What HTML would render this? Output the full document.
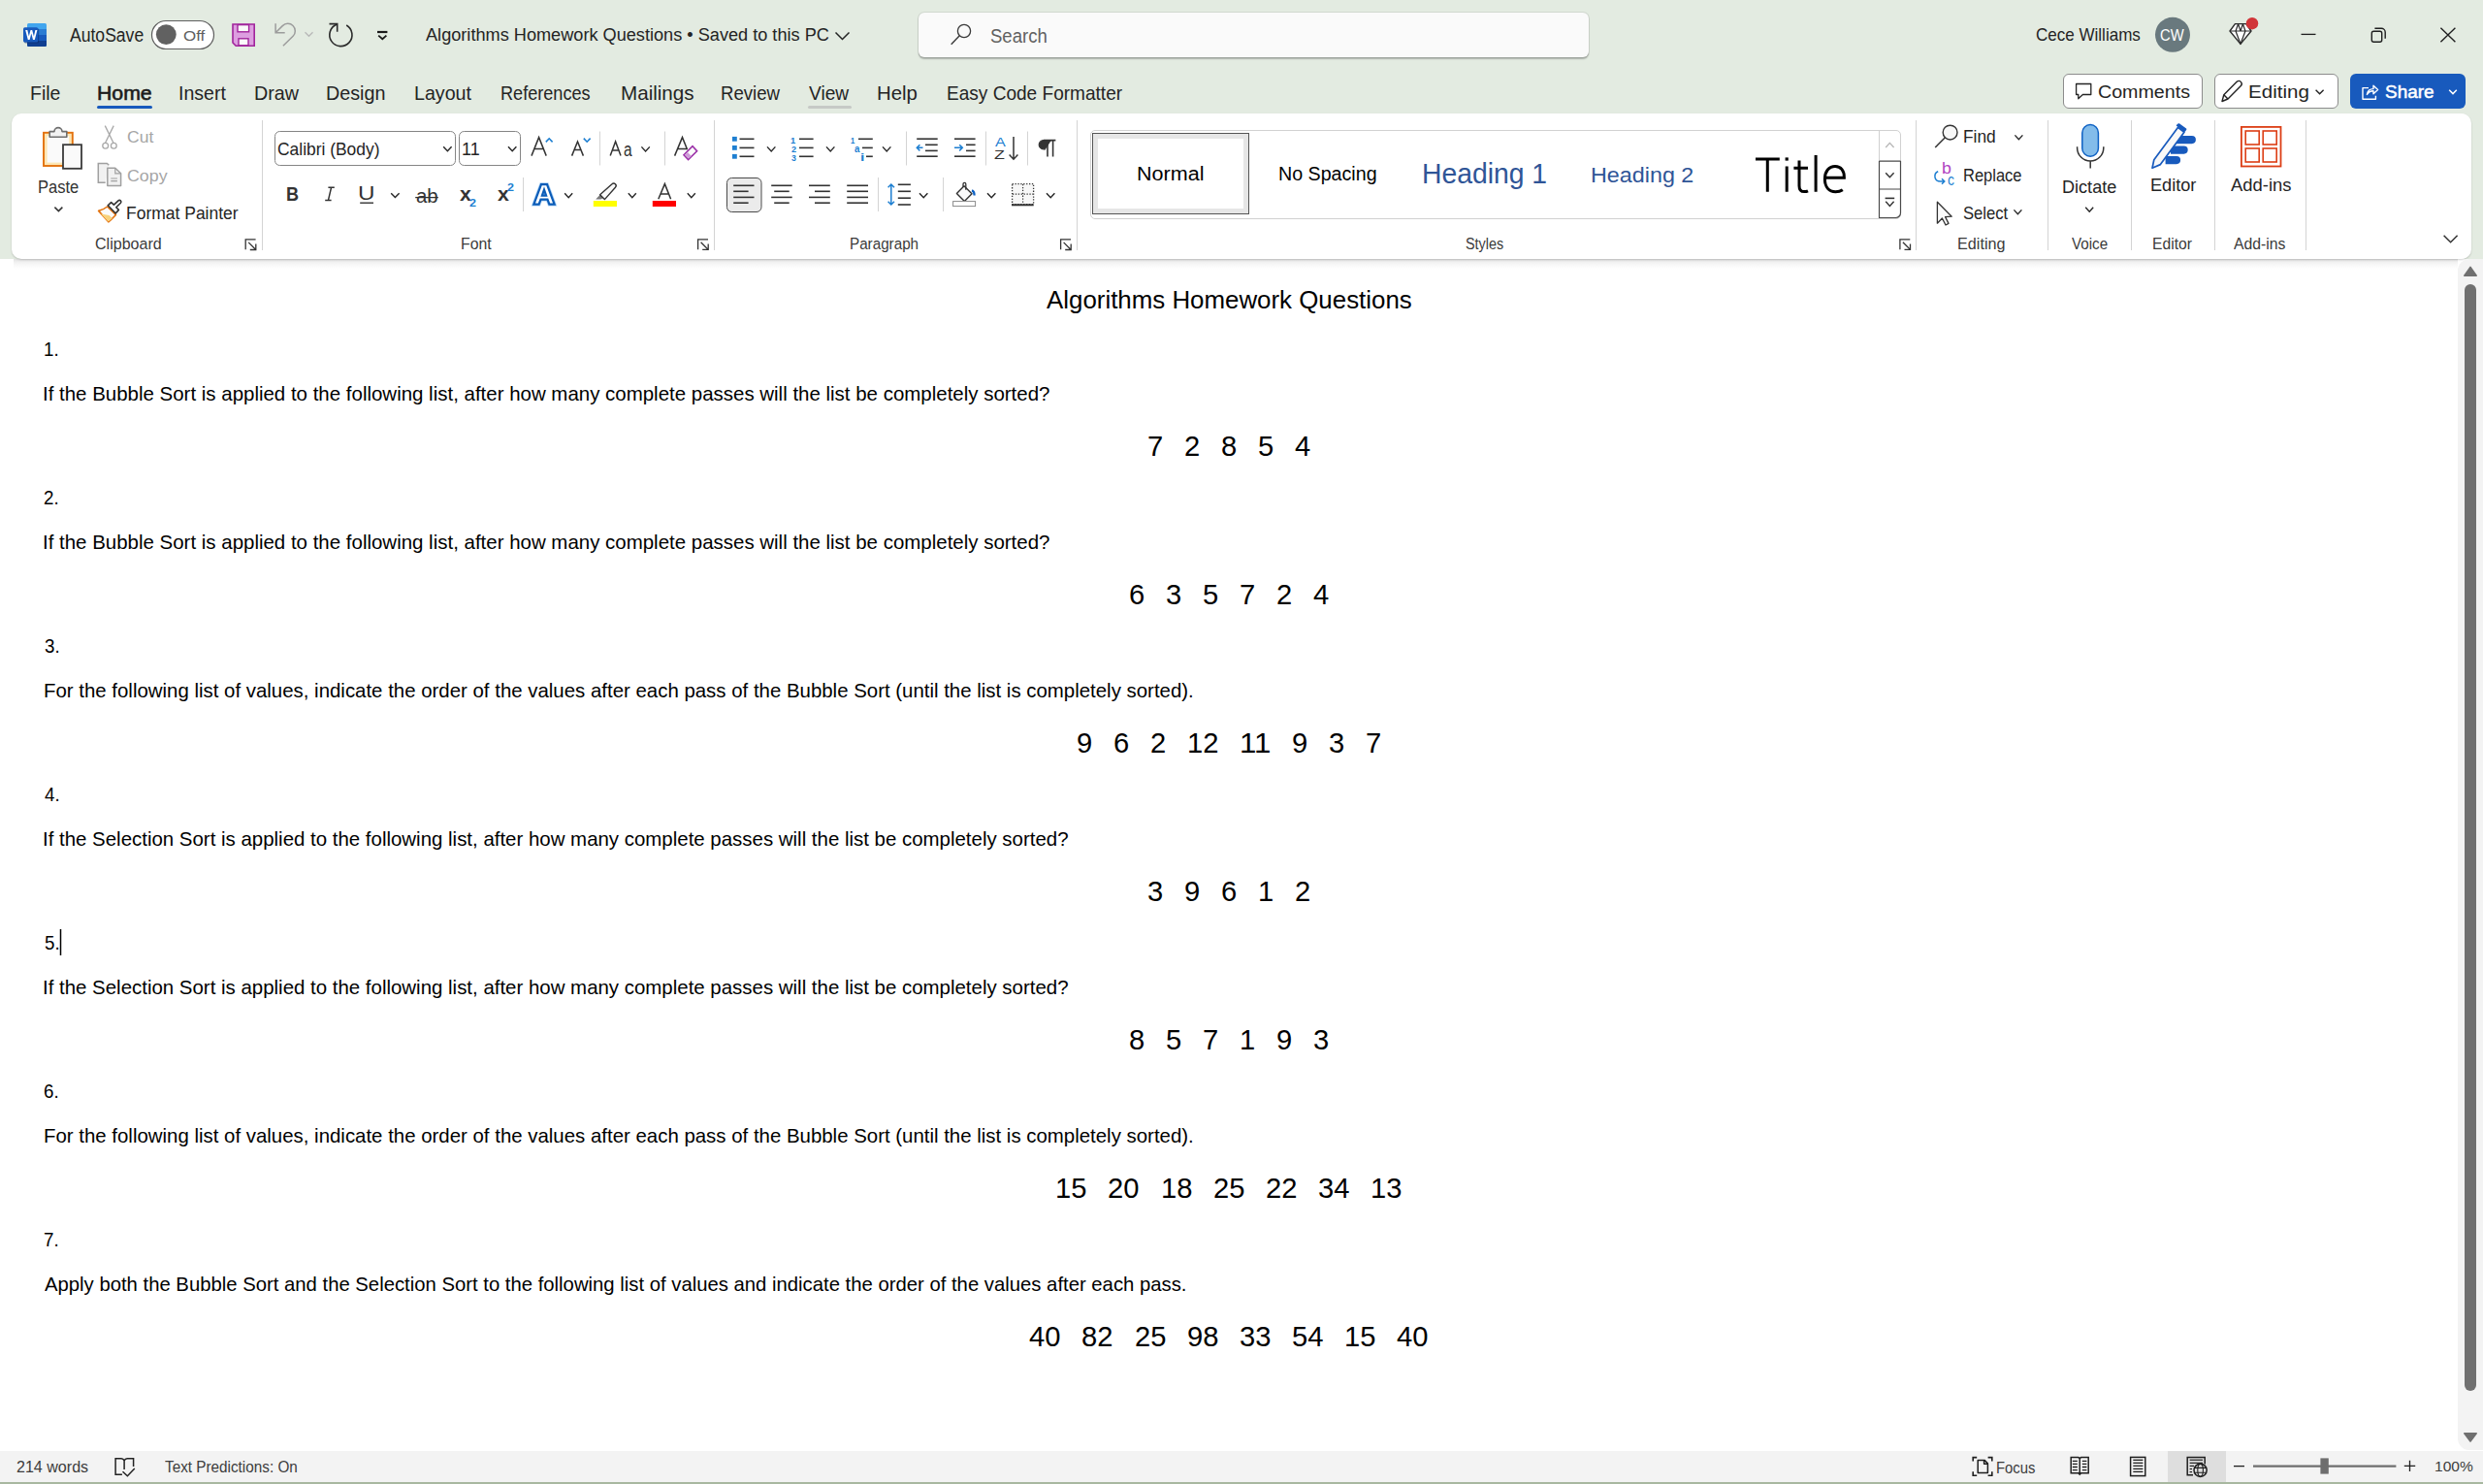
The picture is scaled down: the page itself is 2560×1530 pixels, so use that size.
<!DOCTYPE html>
<html><head><meta charset="utf-8"><title>Algorithms Homework Questions - Word</title>
<style>
html,body{margin:0;padding:0;width:2560px;height:1530px;overflow:hidden;background:#fff}
body{position:relative;font-family:"Liberation Sans",sans-serif}
.t{position:absolute;white-space:nowrap;line-height:0;transform-origin:0 0;font-family:"Liberation Sans",sans-serif}
svg{overflow:visible}
</style></head><body>
<div style="position:absolute;left:0px;top:0px;width:2560px;height:267px;background:#e3ebe1;"></div>
<div style="position:absolute;left:0px;top:267px;width:2560px;height:1229px;background:#ffffff;"></div>
<div style="position:absolute;left:14px;top:267px;width:2520px;height:11px;background:linear-gradient(#e2e2e2,#f3f3f3 35%,#fcfcfc 75%,#fff)"></div>
<div style="position:absolute;left:12px;top:117px;width:2536px;height:150px;background:#fff;border-radius:10px;box-shadow:0 1px 2px rgba(0,0,0,0.18)"></div>
<div style="position:absolute;left:0px;top:1496px;width:2560px;height:32px;background:#f3f3f3;"></div>
<div style="position:absolute;left:0px;top:1528px;width:2560px;height:2px;background:#a8b8a0;"></div>
<div class="t" style="left:71.50px;top:36.51px;font-size:19.31px;color:#242424;transform:scaleX(0.9102)">AutoSave</div>
<div class="t" style="left:438.50px;top:36.41px;font-size:19.03px;color:#242424;transform:scaleX(0.9544)">Algorithms Homework Questions • Saved to this PC</div>
<div class="t" style="left:2099.45px;top:36.35px;font-size:17.75px;color:#242424;transform:scaleX(0.9591)">Cece Williams</div>
<div style="position:absolute;left:947px;top:13px;width:691px;height:46px;background:#fafafa;border-radius:6px;box-shadow:0 0 0 1px rgba(0,0,0,0.07),0 1.5px 1.5px rgba(0,0,0,0.25)"></div>
<div class="t" style="left:1020.66px;top:36.91px;font-size:20.45px;color:#616161;transform:scaleX(0.9078)">Search</div>
<div class="t" style="left:31.44px;top:96.21px;font-size:20.16px;color:#242424;transform:scaleX(0.9652)">File</div>
<div class="t" style="left:99.50px;top:96.21px;font-size:20.16px;color:#1b1b1b;transform:scaleX(1.0542);-webkit-text-stroke:0.6px #1b1b1b">Home</div>
<div class="t" style="left:183.84px;top:96.21px;font-size:20.16px;color:#242424;transform:scaleX(0.9692)">Insert</div>
<div class="t" style="left:261.92px;top:96.21px;font-size:20.16px;color:#242424;transform:scaleX(0.9787)">Draw</div>
<div class="t" style="left:336.42px;top:96.21px;font-size:20.16px;color:#242424;transform:scaleX(0.9785)">Design</div>
<div class="t" style="left:426.63px;top:96.21px;font-size:20.16px;color:#242424;transform:scaleX(0.9749)">Layout</div>
<div class="t" style="left:516.25px;top:96.21px;font-size:20.16px;color:#242424;transform:scaleX(0.8986)">References</div>
<div class="t" style="left:639.65px;top:96.21px;font-size:20.16px;color:#242424;transform:scaleX(1.0226)">Mailings</div>
<div class="t" style="left:742.91px;top:96.21px;font-size:20.16px;color:#242424;transform:scaleX(0.9237)">Review</div>
<div class="t" style="left:833.70px;top:96.21px;font-size:20.16px;color:#242424;transform:scaleX(0.9479)">View</div>
<div class="t" style="left:903.77px;top:96.21px;font-size:20.16px;color:#242424;transform:scaleX(1.0098)">Help</div>
<div class="t" style="left:976.47px;top:96.21px;font-size:20.16px;color:#242424;transform:scaleX(0.9455)">Easy Code Formatter</div>
<div style="position:absolute;left:100px;top:109px;width:57px;height:3px;background:#185abd;border-radius:2px"></div>
<div style="position:absolute;left:833px;top:109px;width:45px;height:3px;background:#c6c9c6;border-radius:2px"></div>
<div class="t" style="left:97.70px;top:251.89px;font-size:15.62px;color:#3b3b3b;transform:scaleX(1.0286)">Clipboard</div>
<div class="t" style="left:475.43px;top:251.89px;font-size:15.62px;color:#3b3b3b;transform:scaleX(1.0130)">Font</div>
<div class="t" style="left:875.78px;top:251.89px;font-size:15.62px;color:#3b3b3b;transform:scaleX(0.9751)">Paragraph</div>
<div class="t" style="left:1511.25px;top:251.89px;font-size:15.62px;color:#3b3b3b;transform:scaleX(0.9222)">Styles</div>
<div class="t" style="left:2018.40px;top:251.89px;font-size:15.62px;color:#3b3b3b;transform:scaleX(1.0366)">Editing</div>
<div class="t" style="left:2136.22px;top:251.89px;font-size:15.62px;color:#3b3b3b;transform:scaleX(0.9710)">Voice</div>
<div class="t" style="left:2219.25px;top:251.89px;font-size:15.62px;color:#3b3b3b;transform:scaleX(1.0035)">Editor</div>
<div class="t" style="left:2303.30px;top:251.89px;font-size:15.62px;color:#3b3b3b;transform:scaleX(1.0094)">Add-ins</div>
<div style="position:absolute;left:270px;top:124px;width:1px;height:134px;background:#d4d4d4;"></div>
<div style="position:absolute;left:736px;top:124px;width:1px;height:134px;background:#d4d4d4;"></div>
<div style="position:absolute;left:1110px;top:124px;width:1px;height:134px;background:#d4d4d4;"></div>
<div style="position:absolute;left:1975px;top:124px;width:1px;height:134px;background:#d4d4d4;"></div>
<div style="position:absolute;left:2111px;top:124px;width:1px;height:134px;background:#d4d4d4;"></div>
<div style="position:absolute;left:2197px;top:124px;width:1px;height:134px;background:#d4d4d4;"></div>
<div style="position:absolute;left:2283px;top:124px;width:1px;height:134px;background:#d4d4d4;"></div>
<div style="position:absolute;left:2377px;top:124px;width:1px;height:134px;background:#d4d4d4;"></div>
<div class="t" style="left:16.60px;top:1512.59px;font-size:15.62px;color:#3d3d3d;transform:scaleX(1.0289)">214 words</div>
<div class="t" style="left:170.09px;top:1512.59px;font-size:15.62px;color:#3d3d3d;transform:scaleX(0.9793)">Text Predictions: On</div>
<div class="t" style="left:2058.31px;top:1512.74px;font-size:16.33px;color:#3d3d3d;transform:scaleX(0.9080)">Focus</div>
<div class="t" style="left:2509.63px;top:1512.49px;font-size:15.34px;color:#3d3d3d;transform:scaleX(1.0140)">100%</div>
<div class="t" style="left:1079.00px;top:309.14px;font-size:25.56px;color:#000000;transform:scaleX(1.0128)">Algorithms Homework Questions</div>
<div class="t" style="left:44.89px;top:360.20px;font-size:20.20px;color:#000000;transform:scaleX(0.9300)">1.</div>
<div class="t" style="left:44.46px;top:406.20px;font-size:20.20px;color:#000000;transform:scaleX(1.0136)">If the Bubble Sort is applied to the following list, after how many complete passes will the list be completely sorted?</div>
<div class="t" style="left:1183.05px;top:460.19px;font-size:28.9px;color:#000000;transform:scaleX(1.0094)">7</div>
<div class="t" style="left:1220.97px;top:460.19px;font-size:28.9px;color:#000000;transform:scaleX(1.0094)">2</div>
<div class="t" style="left:1258.89px;top:460.19px;font-size:28.9px;color:#000000;transform:scaleX(1.0094)">8</div>
<div class="t" style="left:1296.81px;top:460.19px;font-size:28.9px;color:#000000;transform:scaleX(1.0094)">5</div>
<div class="t" style="left:1334.73px;top:460.19px;font-size:28.9px;color:#000000;transform:scaleX(1.0094)">4</div>
<div class="t" style="left:45.36px;top:513.10px;font-size:20.20px;color:#000000;transform:scaleX(0.9300)">2.</div>
<div class="t" style="left:44.46px;top:559.10px;font-size:20.20px;color:#000000;transform:scaleX(1.0136)">If the Bubble Sort is applied to the following list, after how many complete passes will the list be completely sorted?</div>
<div class="t" style="left:1164.09px;top:613.09px;font-size:28.9px;color:#000000;transform:scaleX(1.0094)">6</div>
<div class="t" style="left:1202.01px;top:613.09px;font-size:28.9px;color:#000000;transform:scaleX(1.0094)">3</div>
<div class="t" style="left:1239.93px;top:613.09px;font-size:28.9px;color:#000000;transform:scaleX(1.0094)">5</div>
<div class="t" style="left:1277.85px;top:613.09px;font-size:28.9px;color:#000000;transform:scaleX(1.0094)">7</div>
<div class="t" style="left:1315.77px;top:613.09px;font-size:28.9px;color:#000000;transform:scaleX(1.0094)">2</div>
<div class="t" style="left:1353.69px;top:613.09px;font-size:28.9px;color:#000000;transform:scaleX(1.0094)">4</div>
<div class="t" style="left:45.64px;top:666.00px;font-size:20.20px;color:#000000;transform:scaleX(0.9300)">3.</div>
<div class="t" style="left:44.67px;top:712.00px;font-size:20.20px;color:#000000;transform:scaleX(1.0112)">For the following list of values, indicate the order of the values after each pass of the Bubble Sort (until the list is completely sorted).</div>
<div class="t" style="left:1109.94px;top:765.99px;font-size:28.9px;color:#000000;transform:scaleX(1.0094)">9</div>
<div class="t" style="left:1147.86px;top:765.99px;font-size:28.9px;color:#000000;transform:scaleX(1.0094)">6</div>
<div class="t" style="left:1185.78px;top:765.99px;font-size:28.9px;color:#000000;transform:scaleX(1.0094)">2</div>
<div class="t" style="left:1223.70px;top:765.99px;font-size:28.9px;color:#000000;transform:scaleX(1.0094)">12</div>
<div class="t" style="left:1277.85px;top:765.99px;font-size:28.9px;color:#000000;transform:scaleX(1.0815)">11</div>
<div class="t" style="left:1331.99px;top:765.99px;font-size:28.9px;color:#000000;transform:scaleX(1.0094)">9</div>
<div class="t" style="left:1369.91px;top:765.99px;font-size:28.9px;color:#000000;transform:scaleX(1.0094)">3</div>
<div class="t" style="left:1407.83px;top:765.99px;font-size:28.9px;color:#000000;transform:scaleX(1.0094)">7</div>
<div class="t" style="left:45.92px;top:818.90px;font-size:20.20px;color:#000000;transform:scaleX(0.9300)">4.</div>
<div class="t" style="left:44.46px;top:864.90px;font-size:20.20px;color:#000000;transform:scaleX(1.0123)">If the Selection Sort is applied to the following list, after how many complete passes will the list be completely sorted?</div>
<div class="t" style="left:1183.05px;top:918.89px;font-size:28.9px;color:#000000;transform:scaleX(1.0094)">3</div>
<div class="t" style="left:1220.97px;top:918.89px;font-size:28.9px;color:#000000;transform:scaleX(1.0094)">9</div>
<div class="t" style="left:1258.89px;top:918.89px;font-size:28.9px;color:#000000;transform:scaleX(1.0094)">6</div>
<div class="t" style="left:1296.81px;top:918.89px;font-size:28.9px;color:#000000;transform:scaleX(1.0094)">1</div>
<div class="t" style="left:1334.73px;top:918.89px;font-size:28.9px;color:#000000;transform:scaleX(1.0094)">2</div>
<div class="t" style="left:45.55px;top:971.80px;font-size:20.20px;color:#000000;transform:scaleX(0.9300)">5.</div>
<div class="t" style="left:44.46px;top:1017.80px;font-size:20.20px;color:#000000;transform:scaleX(1.0123)">If the Selection Sort is applied to the following list, after how many complete passes will the list be completely sorted?</div>
<div class="t" style="left:1164.09px;top:1071.79px;font-size:28.9px;color:#000000;transform:scaleX(1.0094)">8</div>
<div class="t" style="left:1202.01px;top:1071.79px;font-size:28.9px;color:#000000;transform:scaleX(1.0094)">5</div>
<div class="t" style="left:1239.93px;top:1071.79px;font-size:28.9px;color:#000000;transform:scaleX(1.0094)">7</div>
<div class="t" style="left:1277.85px;top:1071.79px;font-size:28.9px;color:#000000;transform:scaleX(1.0094)">1</div>
<div class="t" style="left:1315.77px;top:1071.79px;font-size:28.9px;color:#000000;transform:scaleX(1.0094)">9</div>
<div class="t" style="left:1353.69px;top:1071.79px;font-size:28.9px;color:#000000;transform:scaleX(1.0094)">3</div>
<div class="t" style="left:45.36px;top:1124.70px;font-size:20.20px;color:#000000;transform:scaleX(0.9300)">6.</div>
<div class="t" style="left:44.67px;top:1170.70px;font-size:20.20px;color:#000000;transform:scaleX(1.0112)">For the following list of values, indicate the order of the values after each pass of the Bubble Sort (until the list is completely sorted).</div>
<div class="t" style="left:1088.34px;top:1224.69px;font-size:28.9px;color:#000000;transform:scaleX(1.0094)">15</div>
<div class="t" style="left:1142.49px;top:1224.69px;font-size:28.9px;color:#000000;transform:scaleX(1.0094)">20</div>
<div class="t" style="left:1196.63px;top:1224.69px;font-size:28.9px;color:#000000;transform:scaleX(1.0094)">18</div>
<div class="t" style="left:1250.78px;top:1224.69px;font-size:28.9px;color:#000000;transform:scaleX(1.0094)">25</div>
<div class="t" style="left:1304.92px;top:1224.69px;font-size:28.9px;color:#000000;transform:scaleX(1.0094)">22</div>
<div class="t" style="left:1359.06px;top:1224.69px;font-size:28.9px;color:#000000;transform:scaleX(1.0094)">34</div>
<div class="t" style="left:1413.21px;top:1224.69px;font-size:28.9px;color:#000000;transform:scaleX(1.0094)">13</div>
<div class="t" style="left:45.36px;top:1277.60px;font-size:20.20px;color:#000000;transform:scaleX(0.9300)">7.</div>
<div class="t" style="left:46.30px;top:1323.60px;font-size:20.20px;color:#000000;transform:scaleX(1.0050)">Apply both the Bubble Sort and the Selection Sort to the following list of values and indicate the order of the values after each pass.</div>
<div class="t" style="left:1061.27px;top:1377.59px;font-size:28.9px;color:#000000;transform:scaleX(1.0094)">40</div>
<div class="t" style="left:1115.42px;top:1377.59px;font-size:28.9px;color:#000000;transform:scaleX(1.0094)">82</div>
<div class="t" style="left:1169.56px;top:1377.59px;font-size:28.9px;color:#000000;transform:scaleX(1.0094)">25</div>
<div class="t" style="left:1223.70px;top:1377.59px;font-size:28.9px;color:#000000;transform:scaleX(1.0094)">98</div>
<div class="t" style="left:1277.85px;top:1377.59px;font-size:28.9px;color:#000000;transform:scaleX(1.0094)">33</div>
<div class="t" style="left:1331.99px;top:1377.59px;font-size:28.9px;color:#000000;transform:scaleX(1.0094)">54</div>
<div class="t" style="left:1386.14px;top:1377.59px;font-size:28.9px;color:#000000;transform:scaleX(1.0094)">15</div>
<div class="t" style="left:1440.28px;top:1377.59px;font-size:28.9px;color:#000000;transform:scaleX(1.0094)">40</div>
<svg style="position:absolute;left:50px;top:950px" width="30" height="40" viewBox="50 950 30 40" fill="none"><path d="M62.5 958v27" stroke="#000" stroke-width="1.5"/></svg>
<svg style="position:absolute;left:0px;top:0px" width="2560" height="60" viewBox="0 0 2560 60" fill="none"><rect x="28" y="24" width="20" height="24" rx="1.6" fill="#41a5ee"/><rect x="28" y="30" width="20" height="6" fill="#2b7cd3"/><rect x="28" y="36" width="20" height="6" fill="#185abd"/><path d="M28 42h20v4.4a1.6 1.6 0 0 1-1.6 1.6H29.6a1.6 1.6 0 0 1-1.6-1.6z" fill="#103f91"/><rect x="25" y="29.2" width="15.2" height="15.4" rx="1.6" fill="#0b2a66" opacity="0.55"/><rect x="24" y="28.2" width="15.2" height="15.4" rx="1.6" fill="#185abd"/><path d="M26.2 31h2.1l1.5 6.6 1.7-6.6h1.7l1.7 6.6 1.5-6.6h2l-2.6 10h-1.8l-1.7-6.4-1.7 6.4h-1.8z" fill="#fff"/><rect x="156.5" y="21.5" width="64" height="29" rx="14.5" fill="#fff" stroke="#5f5f5f" stroke-width="1.2"/><circle cx="171.3" cy="35.6" r="10.4" fill="#616161"/><path d="M240 25h22.2v22.2H243.2l-3.2-3.2z" fill="#dd9ee0" stroke="#a1259c" stroke-width="1.6"/><rect x="245" y="25.6" width="11.6" height="7.2" fill="#fafafa" stroke="#a1259c" stroke-width="1.4"/><rect x="246" y="39.8" width="10" height="7" fill="#fafafa" stroke="#a1259c" stroke-width="1.4"/><path d="M284.1 24.2v9.6h9.6M284.1 33.8l7.2-7.2a7.6 7.6 0 0 1 10.8 10.7l-10.2 10" stroke="#9c9c9c" stroke-width="1.5" fill="none"/><path d="M314.5 33.3l4 4 4-4" stroke="#b8b8b8" stroke-width="1.3" fill="none"/><path d="M339.5 24.6h8.2v8.2" stroke="#2b2b2b" stroke-width="1.6" fill="none"/><path d="M347 25.3A11.6 11.6 0 1 0 357.2 26" stroke="#2b2b2b" stroke-width="1.6" fill="none"/><path d="M389 33h10.4" stroke="#1a1a1a" stroke-width="2.2"/><path d="M390.2 36.6l4.1 3.6 4.1-3.6" stroke="#1a1a1a" stroke-width="1.8" fill="none"/><path d="M861.5 33.5l7 7 7-7" stroke="#242424" stroke-width="1.5" fill="none"/><circle cx="994" cy="32" r="6.6" stroke="#3a3a3a" stroke-width="1.3" fill="none"/><path d="M989.3 36.7l-8.6 9" stroke="#3a3a3a" stroke-width="1.4"/><circle cx="2240" cy="35.8" r="18" fill="#69797e"/><path d="M2304.4 24.6h11.4l5.2 7.4-11 13.4-11-13.4z" fill="#fff" stroke="#2b2b2b" stroke-width="1.4" stroke-linejoin="round"/><path d="M2299 32h22M2307.6 24.8l-2.6 7.2 5 13.2 5-13.2-2.6-7.2M2307.6 24.8l2.4 7.2 2.4-7.2" stroke="#2b2b2b" stroke-width="1.2" fill="none" stroke-linejoin="round"/><circle cx="2322" cy="24.2" r="6.2" fill="#d13438"/><path d="M2372.5 35.4h15" stroke="#1f1f1f" stroke-width="1.3"/><rect x="2445.3" y="32.3" width="10.4" height="11" rx="2" stroke="#1f1f1f" stroke-width="1.4" fill="none"/><path d="M2448.4 29.2h6.8a4 4 0 0 1 4 4v6.6" stroke="#1f1f1f" stroke-width="1.4" fill="none"/><path d="M2516.4 28.8l15 14.4M2531.4 28.8l-15 14.4" stroke="#1f1f1f" stroke-width="1.4"/></svg>
<div class="t" style="left:188.64px;top:36.58px;font-size:15.05px;color:#5f5f5f;transform:scaleX(1.1255)">Off</div>
<div class="t" style="left:2226.66px;top:36.69px;font-size:15.90px;color:#ffffff;transform:scaleX(0.9295)">CW</div>
<div style="position:absolute;left:2127px;top:76px;width:142px;height:34px;border:1px solid #8c8c8c;border-radius:6px;background:#fff"></div>
<div style="position:absolute;left:2283px;top:76px;width:126px;height:34px;border:1px solid #8c8c8c;border-radius:6px;background:#fff"></div>
<div style="position:absolute;left:2423px;top:76px;width:119px;height:36px;border-radius:6px;background:#185abd"></div>
<svg style="position:absolute;left:0px;top:60px" width="2560" height="60" viewBox="0 60 2560 60" fill="none"><path d="M2140.6 86.5h15.2v11h-8.4l-4.6 4.2v-4.2h-2.2z" stroke="#242424" stroke-width="1.3" fill="none" stroke-linejoin="round"/><path d="M2291 104.5l1.8-6.8 13.6-13.6a3 3 0 0 1 4.2 4.2L2297 102z M2292.8 97.7l4.2 4.3" stroke="#242424" stroke-width="1.4" fill="none" stroke-linejoin="round"/><path d="M2387.6 92.8l4 4 4-4" stroke="#242424" stroke-width="1.4" fill="none"/><path d="M2442 90.6h-6v11.6h13.4v-3.4 M2440.4 97.4c0.6-3.6 3-5.8 6.6-5.8V88.2l4.6 4.3-4.6 4.3v-3.1c-2.8 0-5 1.2-6.6 3.7z" stroke="#fff" stroke-width="1.4" fill="none" stroke-linejoin="round"/><path d="M2525.2 92.8l3.8 3.8 3.8-3.8" stroke="#fff" stroke-width="1.5" fill="none"/></svg>
<div class="t" style="left:2162.62px;top:94.86px;font-size:19.17px;color:#242424;transform:scaleX(1.0257)">Comments</div>
<div class="t" style="left:2318.15px;top:94.86px;font-size:19.17px;color:#242424;transform:scaleX(1.0737)">Editing</div>
<div class="t" style="left:2458.65px;top:94.86px;font-size:19.17px;color:#ffffff;transform:scaleX(0.9887);-webkit-text-stroke:0.5px #fff">Share</div>
<svg style="position:absolute;left:0px;top:120px" width="2560" height="150" viewBox="0 120 2560 150" fill="none"><rect x="45" y="136.8" width="29.8" height="34.2" fill="#fde6b3" stroke="#e3720e" stroke-width="1.9"/><rect x="48.6" y="140.2" width="22.6" height="27.4" fill="#fafafa"/><path d="M51.2 141.2v-5.6h4.8a4 4 0 0 1 8 0h4.8v5.6z" fill="#f2f2f2" stroke="#6e6e6e" stroke-width="1.6" stroke-linejoin="round"/><rect x="65" y="149.2" width="19" height="24.6" fill="#fafafa" stroke="#3a3a3a" stroke-width="1.8"/><path d="M56.4 213.6l4 4 4-4" stroke="#333" stroke-width="1.5" fill="none"/><path d="M108.3 129.6l8.6 17.6M117.2 129.6l-8.6 17.6" stroke="#a8a8a8" stroke-width="1.3" fill="none"/><circle cx="108.7" cy="150.2" r="2.9" stroke="#a8a8a8" stroke-width="1.3" fill="none"/><circle cx="117.3" cy="150.2" r="2.9" stroke="#a8a8a8" stroke-width="1.3" fill="none"/><path d="M108.7 188.3h-7.4V168.4h9l2 1.8" stroke="#a0a0a0" stroke-width="1.5" fill="#f1f1f1"/><path d="M110.8 173.2h8l5.8 5.6v12.6h-13.8z" stroke="#a0a0a0" stroke-width="1.5" fill="#f1f1f1" stroke-linejoin="round"/><path d="M118.8 173.2v5.6h5.8M114.3 184h6.6M114.3 186.6h6.6" stroke="#a0a0a0" stroke-width="1.2" fill="none"/><path d="M101.6 217.4c3.6-0.8 6.4-2.2 9-4.4l8.8 8.4c-2.4 2.6-4.2 5-7.6 7.4z" fill="#fafafa" stroke="#e3720e" stroke-width="1.6" stroke-linejoin="round"/><path d="M104 220.4l8.6 1.6 3.2 3.2-4.2 3.4z" fill="#f8d27c"/><path d="M111.2 211.8l3.4-3.2 2.8 2.6 4.6-4.4a1.7 1.7 0 0 1 2.4 2.4l-4.6 4.6 2.6 2.6-3.2 3.6z" stroke="#333" stroke-width="1.6" fill="#fafafa" stroke-linejoin="round"/><path d="M253.2 257.3V246.9h10.4" stroke="#333" stroke-width="1.3" fill="none"/><path d="M256.2 249.9l7.6 7.6M257.8 257.5h6v-6" stroke="#333" stroke-width="1.3" fill="none"/><path d="M719.6 257.2V246.79999999999998h10.4" stroke="#333" stroke-width="1.3" fill="none"/><path d="M722.6 249.79999999999998l7.6 7.6M724.2 257.4h6v-6" stroke="#333" stroke-width="1.3" fill="none"/><path d="M1093.6 257.3V246.9h10.4" stroke="#333" stroke-width="1.3" fill="none"/><path d="M1096.6 249.9l7.6 7.6M1098.2 257.5h6v-6" stroke="#333" stroke-width="1.3" fill="none"/><path d="M1958.8999999999999 257.2V246.79999999999998h10.4" stroke="#333" stroke-width="1.3" fill="none"/><path d="M1961.8999999999999 249.79999999999998l7.6 7.6M1963.5 257.4h6v-6" stroke="#333" stroke-width="1.3" fill="none"/><rect x="283.5" y="135.5" width="186" height="35" rx="5" fill="#fff" stroke="#858585" stroke-width="1"/><rect x="473.5" y="135.5" width="63" height="35" rx="5" fill="#fff" stroke="#858585" stroke-width="1"/><path d="M457.2 151.2l4.2 4.6 4.2 -4.6" stroke="#262626" stroke-width="1.4" fill="none"/><path d="M524 151.2l4.2 4.6 4.2 -4.6" stroke="#262626" stroke-width="1.4" fill="none"/><path d="M562.8 146.4l3.4-3.6 3.4 3.6" stroke="#1e7fd1" stroke-width="1.6" fill="none"/><path d="M601.8 142.6l3.4 3.6 3.4-3.6" stroke="#1e7fd1" stroke-width="1.6" fill="none"/><path d="M618.5 135.5v35M685.5 135.5v35" stroke="#d4d4d4" stroke-width="1"/><path d="M661.4 151.4l4.2 4.6 4.2 -4.6" stroke="#262626" stroke-width="1.4" fill="none"/><path d="M705 159.7l9-9 4.6 5-9 8.8z" fill="#fafafa" stroke="#9b30a8" stroke-width="1.6" stroke-linejoin="miter"/><path d="M706.2 159.7l2.8-2.8 3.8 4-2.8 2.6z" fill="#cf9bd8"/><path d="M371.2 209.2h13.8" stroke="#333" stroke-width="1.4"/><path d="M403.2 199.2l4.2 4.4 4.2 -4.4" stroke="#262626" stroke-width="1.4" fill="none"/><path d="M428.2 203.6h23.6" stroke="#333" stroke-width="1.3"/><path d="M539.5 183v35" stroke="#d4d4d4" stroke-width="1"/><path d="M338.4 193.2h6.4M335.2 206.6h6.4M341.6 193.2l-3.2 13.4" stroke="#333" stroke-width="1.5" fill="none"/><path d="M550.4 210.6L558 190.2h6L571.6 210.6h-5.2l-1.9-5h-7l-1.9 5z M558.9 201.6h4.2l-2.1-6z" fill="none" stroke="#a9d0f5" stroke-width="3.8" stroke-linejoin="miter"/><path d="M550.4 210.6L558 190.2h6L571.6 210.6h-5.2l-1.9-5h-7l-1.9 5z M558.9 201.6h4.2l-2.1-6z" fill="#fff" fill-rule="evenodd" stroke="#0b5cb8" stroke-width="2.2" stroke-linejoin="miter"/><path d="M582.2 199.2l4.0 4.4 4.0 -4.4" stroke="#262626" stroke-width="1.4" fill="none"/><path d="M614.2 205.6l4.4-4.8 3.6 3.2-2.8 1.6z" fill="#7a7a7a"/><path d="M618.6 200.8l12.4-11a2.4 2.4 0 0 1 3.4 3.4l-11 12.4-4.8-4.8z" fill="#fafafa" stroke="#333" stroke-width="1.4" stroke-linejoin="round"/><rect x="611.8" y="207" width="24.2" height="6" fill="#ffff00"/><path d="M647.8 199.2l4.0 4.4 4.0 -4.4" stroke="#262626" stroke-width="1.4" fill="none"/><rect x="672.8" y="207" width="24.2" height="6" fill="#ff0000"/><path d="M708.8 199.2l4.0 4.4 4.0 -4.4" stroke="#262626" stroke-width="1.4" fill="none"/><path d="M548 160.6L555.6 141.6 563.2 160.6M550.4 153.6h10.4" stroke="#333" stroke-width="1.5" fill="none" stroke-linejoin="miter"/><path d="M589.6 160.6L595.5 146 601.4 160.6M591.6 154.4h7.8" stroke="#333" stroke-width="1.5" fill="none" stroke-linejoin="miter"/><path d="M629.2 160.6L634.6 146 640 160.6M631.2 155h6.8" stroke="#333" stroke-width="1.5" fill="none" stroke-linejoin="miter"/><path d="M695.6 160.6L703.5 141.6 708.6 154.2M697.9 153.6h10" stroke="#333" stroke-width="1.5" fill="none" stroke-linejoin="miter"/><path d="M678.8 205.2L685.4 189.6 691.6 205.2M680.9 199.9h8.8" stroke="#333" stroke-width="1.5" fill="none" stroke-linejoin="miter"/></svg>
<div class="t" style="left:39.38px;top:192.60px;font-size:17.89px;color:#333333;transform:scaleX(0.9250)">Paste</div>
<div class="t" style="left:130.82px;top:141.90px;font-size:17.04px;color:#a6a6a6;transform:scaleX(1.0290)">Cut</div>
<div class="t" style="left:130.81px;top:180.70px;font-size:17.32px;color:#a6a6a6;transform:scaleX(1.0282)">Copy</div>
<div class="t" style="left:130.30px;top:219.60px;font-size:17.61px;color:#242424;transform:scaleX(0.9930)">Format Painter</div>
<div class="t" style="left:285.83px;top:153.95px;font-size:18.60px;color:#242424;transform:scaleX(0.9368)">Calibri (Body)</div>
<div class="t" style="left:476.26px;top:153.80px;font-size:18.46px;color:#242424;transform:scaleX(0.9709)">11</div>
<div class="t" style="left:643.38px;top:153.88px;font-size:19.40px;color:#333333;transform:scaleX(0.8007)">a</div>
<div class="t" style="left:294.63px;top:199.72px;font-size:21.00px;color:#333333;font-weight:700;transform:scaleX(0.8595)">B</div>
<div class="t" style="left:369.18px;top:199.27px;font-size:20.00px;color:#333333;transform:scaleX(1.2105)">U</div>
<div class="t" style="left:428.68px;top:202.07px;font-size:20.00px;color:#333333;transform:scaleX(1.0194)">ab</div>
<div class="t" style="left:473.69px;top:199.90px;font-size:20.50px;color:#333333;font-weight:700;transform:scaleX(1.0383)">x</div>
<div class="t" style="left:483.96px;top:209.19px;font-size:11.00px;color:#1e7fd1;font-weight:700;transform:scaleX(1.1364)">2</div>
<div class="t" style="left:512.89px;top:199.90px;font-size:20.50px;color:#333333;font-weight:700;transform:scaleX(1.0383)">x</div>
<div class="t" style="left:522.76px;top:193.39px;font-size:11.00px;color:#1e7fd1;font-weight:700;transform:scaleX(1.1364)">2</div>
<svg style="position:absolute;left:0px;top:120px" width="2560" height="150" viewBox="0 120 2560 150" fill="none"><rect x="755" y="140.9" width="4.8" height="4.8" fill="#1e7fd1"/><path d="M762.5 143.3h15.0" stroke="#333333" stroke-width="1.6"/><rect x="755" y="150.0" width="4.8" height="4.8" fill="#1e7fd1"/><path d="M762.5 152.4h15.0" stroke="#333333" stroke-width="1.6"/><rect x="755" y="158.9" width="4.8" height="4.8" fill="#1e7fd1"/><path d="M762.5 161.3h15.0" stroke="#333333" stroke-width="1.6"/><path d="M791 151.4l4.2 4.6 4.2 -4.6" stroke="#262626" stroke-width="1.4" fill="none"/><path d="M824 143.3h14.600000000000023" stroke="#333333" stroke-width="1.6"/><path d="M824 152.4h14.600000000000023" stroke="#333333" stroke-width="1.6"/><path d="M824 161.3h14.600000000000023" stroke="#333333" stroke-width="1.6"/><path d="M852 151.4l4.2 4.6 4.2 -4.6" stroke="#262626" stroke-width="1.4" fill="none"/><path d="M885 143.3h14.799999999999955" stroke="#333333" stroke-width="1.6"/><path d="M889 152.4h10.799999999999955" stroke="#333333" stroke-width="1.6"/><path d="M893 161.3h6.7999999999999545" stroke="#333333" stroke-width="1.6"/><path d="M910 151.4l4.2 4.6 4.2 -4.6" stroke="#262626" stroke-width="1.4" fill="none"/><path d="M934.5 135.5v35M1016.5 135.5v35M1059.5 135.5v35" stroke="#d4d4d4" stroke-width="1"/><path d="M945.2 143.2h21.5" stroke="#333333" stroke-width="1.6"/><path d="M954 149.3h12.700000000000045" stroke="#333333" stroke-width="1.6"/><path d="M954 155.4h12.700000000000045" stroke="#333333" stroke-width="1.6"/><path d="M945.2 161.2h21.5" stroke="#333333" stroke-width="1.6"/><path d="M951.5 152.3h-6M948.4 149.2l-3.1 3.1 3.1 3.1" stroke="#1e7fd1" stroke-width="1.5" fill="none"/><path d="M984 143.2h21.600000000000023" stroke="#333333" stroke-width="1.6"/><path d="M996 149.3h9.600000000000023" stroke="#333333" stroke-width="1.6"/><path d="M996 155.4h9.600000000000023" stroke="#333333" stroke-width="1.6"/><path d="M984 161.2h21.600000000000023" stroke="#333333" stroke-width="1.6"/><path d="M984 152.3h8M989.2 149.2l3.1 3.1-3.1 3.1" stroke="#1e7fd1" stroke-width="1.5" fill="none"/><path d="M1045 141v23M1040.6 159.6l4.4 4.6 4.4-4.6" stroke="#333" stroke-width="1.5" fill="none"/><rect x="749.5" y="183.5" width="35.5" height="35" rx="5" fill="#ebebeb" stroke="#4a4a4a" stroke-width="1"/><path d="M756.2 191.3h21.299999999999955" stroke="#333333" stroke-width="1.6"/><path d="M756.2 197.3h15.399999999999977" stroke="#333333" stroke-width="1.6"/><path d="M756.2 203.4h21.299999999999955" stroke="#333333" stroke-width="1.6"/><path d="M756.2 209.2h15.399999999999977" stroke="#333333" stroke-width="1.6"/><path d="M795.2 191.3h21.5" stroke="#333333" stroke-width="1.6"/><path d="M798.2 197.3h15.5" stroke="#333333" stroke-width="1.6"/><path d="M795.2 203.4h21.5" stroke="#333333" stroke-width="1.6"/><path d="M798.2 209.2h15.5" stroke="#333333" stroke-width="1.6"/><path d="M834 191.3h21.799999999999955" stroke="#333333" stroke-width="1.6"/><path d="M840 197.3h15.799999999999955" stroke="#333333" stroke-width="1.6"/><path d="M834 203.4h21.799999999999955" stroke="#333333" stroke-width="1.6"/><path d="M840 209.2h15.799999999999955" stroke="#333333" stroke-width="1.6"/><path d="M873.2 191.3h21.799999999999955" stroke="#333333" stroke-width="1.6"/><path d="M873.2 197.3h21.799999999999955" stroke="#333333" stroke-width="1.6"/><path d="M873.2 203.4h21.799999999999955" stroke="#333333" stroke-width="1.6"/><path d="M873.2 209.2h21.799999999999955" stroke="#333333" stroke-width="1.6"/><path d="M905.5 183v35M972.5 183v35" stroke="#d4d4d4" stroke-width="1"/><path d="M925.8 190.3h13.100000000000023" stroke="#333333" stroke-width="1.6"/><path d="M925.8 197.3h13.100000000000023" stroke="#333333" stroke-width="1.6"/><path d="M925.8 204.2h13.100000000000023" stroke="#333333" stroke-width="1.6"/><path d="M925.8 211h13.100000000000023" stroke="#333333" stroke-width="1.6"/><path d="M918.8 190v21M915.6 193.2l3.2-3.2 3.2 3.2M915.6 207.8l3.2 3.2 3.2-3.2" stroke="#1e7fd1" stroke-width="1.5" fill="none"/><path d="M948 199.2l4.2 4.6 4.2 -4.6" stroke="#262626" stroke-width="1.4" fill="none"/><path d="M986.4 199.4l7.6-7.6 8 8-7.6 7.6z" fill="#fafafa" stroke="#333" stroke-width="1.4" stroke-linejoin="round"/><path d="M993 192.8v-3a1.4 1.4 0 0 1 2.8 0v6" stroke="#333" stroke-width="1.3" fill="none"/><path d="M1002 196.4c1.8 0.6 2.6 2.4 2.6 5" stroke="#0f62c4" stroke-width="2.2" fill="none"/><rect x="982.6" y="207.6" width="23" height="5" fill="#fff" stroke="#8a8a8a" stroke-width="1"/><path d="M1018 199.2l4.2 4.6 4.2 -4.6" stroke="#262626" stroke-width="1.4" fill="none"/><rect x="1043.6" y="189.6" width="22" height="21" fill="#f7f7f7" stroke="#333" stroke-width="1.3" stroke-dasharray="1.3 1.6"/><path d="M1054.6 190v20M1044 200.1h21" stroke="#333" stroke-width="1.2" stroke-dasharray="1.3 1.6"/><path d="M1043 211.3h22.700000000000045" stroke="#333333" stroke-width="2"/><path d="M1079 199.2l4.2 4.6 4.2 -4.6" stroke="#262626" stroke-width="1.4" fill="none"/><path d="M1084 144.6h-8.2a4.6 4.6 0 0 0 0 9.2h2.2" fill="#333" stroke="#333" stroke-width="1.2"/><path d="M1080 144.6v17M1085.6 144.6v17M1076 144.6h12.4" stroke="#333" stroke-width="1.6" fill="none"/></svg>
<div class="t" style="left:815.44px;top:144.87px;font-size:9.60px;color:#1e7fd1;font-weight:700;transform:scaleX(0.9752)">1</div>
<div class="t" style="left:815.68px;top:153.77px;font-size:9.60px;color:#1e7fd1;font-weight:700;transform:scaleX(0.9549)">2</div>
<div class="t" style="left:815.82px;top:162.67px;font-size:9.60px;color:#1e7fd1;font-weight:700;transform:scaleX(0.9167)">3</div>
<div class="t" style="left:876.54px;top:144.87px;font-size:9.60px;color:#1e7fd1;font-weight:700;transform:scaleX(0.7979)">1</div>
<div class="t" style="left:881.11px;top:153.63px;font-size:10.00px;color:#1e7fd1;font-weight:700;transform:scaleX(0.9720)">a</div>
<div class="t" style="left:887.30px;top:162.53px;font-size:10.00px;color:#1e7fd1;font-weight:700;transform:scaleX(1.5714)">i</div>
<div class="t" style="left:1026.00px;top:146.76px;font-size:13.40px;color:#1e7fd1;transform:scaleX(1.2120)">A</div>
<div class="t" style="left:1025.47px;top:160.36px;font-size:13.40px;color:#333333;transform:scaleX(1.3297)">Z</div>
<div style="position:absolute;left:1124px;top:134px;width:834px;height:90px;border:1px solid #d1d1d1;border-radius:5px;background:#fff"></div>
<div style="position:absolute;left:1126px;top:137px;width:160px;height:82px;border:1px solid #555;background:#fff;box-shadow:inset 0 0 0 5px #e6e6e6"></div>
<svg style="position:absolute;left:0px;top:120px" width="2560" height="150" viewBox="0 120 2560 150" fill="none"><path d="M1937.5 134.5v90" stroke="#d1d1d1" stroke-width="1"/><path d="M1937.5 166.2h22M1937.5 195h22" stroke="#4a4a4a" stroke-width="1.2"/><path d="M1937.5 166v58.5h17a5 5 0 0 0 5-5V166" stroke="#4a4a4a" stroke-width="1.2" fill="none"/><path d="M1944.2 152l4.2-4.6 4.2 4.6" stroke="#b5b5b5" stroke-width="1.3" fill="none"/><path d="M1944.2 178.2l4.2 4.6 4.2 -4.6" stroke="#333" stroke-width="1.4" fill="none"/><path d="M1943.6 204.4h9.6" stroke="#333" stroke-width="1.6"/><path d="M1944.2 207.8l4.2 4.6 4.2 -4.6" stroke="#333" stroke-width="1.4" fill="none"/><circle cx="2010.6" cy="136.6" r="7.4" fill="#f8f8f8" stroke="#333" stroke-width="1.4"/><path d="M2005.4 141.8l-10.2 10.2" stroke="#333" stroke-width="1.5"/><path d="M2077.4 139.4l4.0 4.4 4.0 -4.4" stroke="#262626" stroke-width="1.4" fill="none"/><path d="M1998.2 176.8c-2.4 1-3.6 3.4-3.2 6 0.5 2.6 2.6 4.2 5.4 4.2h4.6M2002 184.2l2.8 2.8-2.8 2.8" stroke="#1e7fd1" stroke-width="1.5" fill="none"/><path d="M1997.4 208.2v22l5-5.2 3.6 7 3-1.6-3.4-6.8 6.6-0.4z" fill="#fafafa" stroke="#333" stroke-width="1.3" stroke-linejoin="round"/><path d="M2076.4 216.4l4.0 4.4 4.0 -4.4" stroke="#262626" stroke-width="1.4" fill="none"/><rect x="2146.8" y="128.6" width="16.6" height="32.6" rx="8.3" fill="#83bcea" stroke="#0f62c4" stroke-width="1.5"/><path d="M2141.6 151.2v1.2a13.6 13.6 0 0 0 27.2 0v-1.2M2155.2 166v7.6" stroke="#333" stroke-width="1.5" fill="none"/><path d="M2150.2 213.8l4.0 4.4 4.0 -4.4" stroke="#262626" stroke-width="1.4" fill="none"/><path d="M2243 140h16.8a4.1 4.1 0 0 1 0 8.2H2243z M2238 150.5h13.6a4.1 4.1 0 0 1 0 8.2H2238z M2232.6 161h11.4a4.1 4.1 0 0 1 0 8.2h-11.4z" fill="#185abd"/><path d="M2219 173.2l1.8-8.4 24.6-33.4 6.6 4.8-24.6 33.4z" fill="#f8f8f8" stroke="#185abd" stroke-width="1.7" stroke-linejoin="round"/><path d="M2244.6 129.4l1.8-1.4 7.2 5.2-1.2 1.8z" fill="#185abd" stroke="#185abd" stroke-width="1.6" stroke-linejoin="round"/><rect x="2310.9" y="130.9" width="40.6" height="40.6" stroke="#dc3e15" stroke-width="1.8" fill="#fff"/><rect x="2315.2" y="135" width="14" height="14" stroke="#dc3e15" stroke-width="1.6" fill="none"/><rect x="2315.2" y="153" width="14" height="14" stroke="#dc3e15" stroke-width="1.6" fill="none"/><rect x="2333.2" y="135" width="14" height="14" stroke="#dc3e15" stroke-width="1.6" fill="none"/><rect x="2333.2" y="153" width="14" height="14" stroke="#dc3e15" stroke-width="1.6" fill="none"/><path d="M2519.6 242.8l7 7 7-7" stroke="#333" stroke-width="1.5" fill="none"/></svg>
<div class="t" style="left:1172.48px;top:178.87px;font-size:20.59px;color:#000;transform:scaleX(1.0472)">Normal</div>
<div class="t" style="left:1318.43px;top:178.87px;font-size:20.59px;color:#000;transform:scaleX(0.9549)">No Spacing</div>
<div class="t" style="left:1466.13px;top:178.87px;font-size:29.54px;color:#2f5597;transform:scaleX(0.9588)">Heading 1</div>
<div class="t" style="left:1639.93px;top:180.13px;font-size:22.72px;color:#2f5597;transform:scaleX(1.0263)">Heading 2</div>
<svg style="position:absolute;left:1800px;top:150px" width="110" height="60" viewBox="1800 150 110 60" fill="none"><path d="M1810 163.9H1834.8M1822.3 163.9V197.7M1842.2 171.4V197.7M1855 165.4V191.4c0 4 2 6.2 5.2 6.2 1.6 0 2.8-0.3 3.8-0.8M1849.4 173.2H1864M1872.1 160V197.7M1882.4 183.2H1901.4c0.2-7.2-3.4-11.8-9.3-11.8-6.4 0-10.7 5.3-10.7 13.2 0 8.2 4.4 13.1 11.1 13.1 3 0 5.4-0.7 7.3-2" stroke="#000" stroke-width="3" fill="none"/><rect x="1840.6" y="162.4" width="3.2" height="3.2" fill="#000"/></svg>
<div class="t" style="left:2023.71px;top:141.20px;font-size:18.18px;color:#242424;transform:scaleX(0.9540)">Find</div>
<div class="t" style="left:2023.78px;top:180.65px;font-size:18.32px;color:#242424;transform:scaleX(0.9011)">Replace</div>
<div class="t" style="left:2023.85px;top:219.60px;font-size:18.46px;color:#242424;transform:scaleX(0.9025)">Select</div>
<div class="t" style="left:2126.25px;top:192.65px;font-size:18.03px;color:#242424;transform:scaleX(1.0033)">Dictate</div>
<div class="t" style="left:2216.55px;top:190.80px;font-size:18.46px;color:#242424;transform:scaleX(0.9845)">Editor</div>
<div class="t" style="left:2299.50px;top:190.80px;font-size:18.46px;color:#242424;transform:scaleX(0.9995)">Add-ins</div>
<div class="t" style="left:2001.84px;top:174.29px;font-size:15.60px;color:#b146c2;transform:scaleX(1.1396)">b</div>
<div class="t" style="left:2008.45px;top:186.11px;font-size:17.00px;color:#1e7fd1;transform:scaleX(0.8114)">c</div>
<div style="position:absolute;left:2534px;top:267px;width:26px;height:1228px;background:#f3f3f3;border-radius:12px 0 0 12px"></div>
<svg style="position:absolute;left:0px;top:260px" width="2560" height="1240" viewBox="0 260 2560 1240" fill="none"><path d="M2547 275.4l6.2 8.8h-12.4z" fill="#707070" stroke="#707070" stroke-width="1.6" stroke-linejoin="round"/><rect x="2541" y="293" width="12" height="1141" rx="6" fill="#707070"/><path d="M2547 1486l6.2-8.2h-12.4z" fill="#707070" stroke="#707070" stroke-width="1.6" stroke-linejoin="round"/></svg>
<svg style="position:absolute;left:0px;top:1496px" width="2560" height="34" viewBox="0 1496 2560 34" fill="none"><path d="M125.9 1520.3H119.1V1503.7h6c1.4 0 2.4 0.8 3 2.4 0.6-1.6 1.6-2.4 3-2.4h6.5v8.4M128.1 1506.2v8.8" stroke="#222" stroke-width="1.5" fill="none"/><path d="M126.5 1517.2l4.9 4.5 7.4-7.6" stroke="#222" stroke-width="1.5" fill="none"/><path d="M2034.2 1506.6v-4h4M2049.6 1502.6h4.2v4M2053.8 1517.2v4h-4.2M2038.2 1521.2h-4v-4" stroke="#1f1f1f" stroke-width="1.6" fill="none"/><path d="M2039.2 1518.4v-13h6.8l3.4 3.4v9.6z M2045.6 1505.6v3.6h3.6" stroke="#1f1f1f" stroke-width="1.5" fill="none" stroke-linejoin="round"/><path d="M2135.2 1502.6h7.6l1.4 1 1.4-1h7.6v16.2h-7.6l-1.4 1.4-1.4-1.4h-7.6z M2144.2 1503.6v16" stroke="#1f1f1f" stroke-width="1.5" fill="none"/><path d="M2136.8 1506.3h5M2146.8 1506.3h4.6" stroke="#1f1f1f" stroke-width="1.3"/><path d="M2136.8 1509.4h5M2146.8 1509.4h4.6" stroke="#1f1f1f" stroke-width="1.3"/><path d="M2136.8 1512.5h5M2146.8 1512.5h4.6" stroke="#1f1f1f" stroke-width="1.3"/><path d="M2136.8 1515.6h5M2146.8 1515.6h4.6" stroke="#1f1f1f" stroke-width="1.3"/><rect x="2196.6" y="1502.4" width="15.2" height="19.2" stroke="#1f1f1f" stroke-width="1.5" fill="none"/><path d="M2199.3 1505.3h10.1" stroke="#1f1f1f" stroke-width="1.3"/><path d="M2199.3 1508.3h10.1" stroke="#1f1f1f" stroke-width="1.3"/><path d="M2199.3 1511.3h10.1" stroke="#1f1f1f" stroke-width="1.3"/><path d="M2199.3 1514.4h10.1" stroke="#1f1f1f" stroke-width="1.3"/><path d="M2199.3 1517.4h10.1" stroke="#1f1f1f" stroke-width="1.3"/><rect x="2235" y="1496" width="60" height="32" fill="#dedede"/><path d="M2261 1520.8h-5.8v-18.4h18v7.2" stroke="#1f1f1f" stroke-width="1.5" fill="none"/><path d="M2257.6 1505.2H2271" stroke="#1f1f1f" stroke-width="1.2"/><path d="M2257.6 1508.3H2271" stroke="#1f1f1f" stroke-width="1.2"/><path d="M2257.6 1511.4H2262" stroke="#1f1f1f" stroke-width="1.2"/><path d="M2257.6 1514.5H2260" stroke="#1f1f1f" stroke-width="1.2"/><path d="M2257.6 1517.6H2260" stroke="#1f1f1f" stroke-width="1.2"/><circle cx="2268.6" cy="1515.8" r="6.6" fill="#dedede" stroke="#1f1f1f" stroke-width="1.5"/><path d="M2262.6 1513.4h12M2262.6 1518.2h12" stroke="#1f1f1f" stroke-width="1.1" fill="none"/><ellipse cx="2268.6" cy="1515.8" rx="2.8" ry="6.4" stroke="#1f1f1f" stroke-width="1.1" fill="none"/><path d="M2303 1511.6h11" stroke="#1f1f1f" stroke-width="1.3"/><path d="M2323 1511.6h147.4" stroke="#6e6e6e" stroke-width="2.4"/><rect x="2392.4" y="1503.4" width="8.4" height="16.2" fill="#6e6e6e"/><path d="M2478.8 1511.4h11.4M2484.5 1505.8v11.2" stroke="#1f1f1f" stroke-width="1.3"/></svg>
</body></html>
